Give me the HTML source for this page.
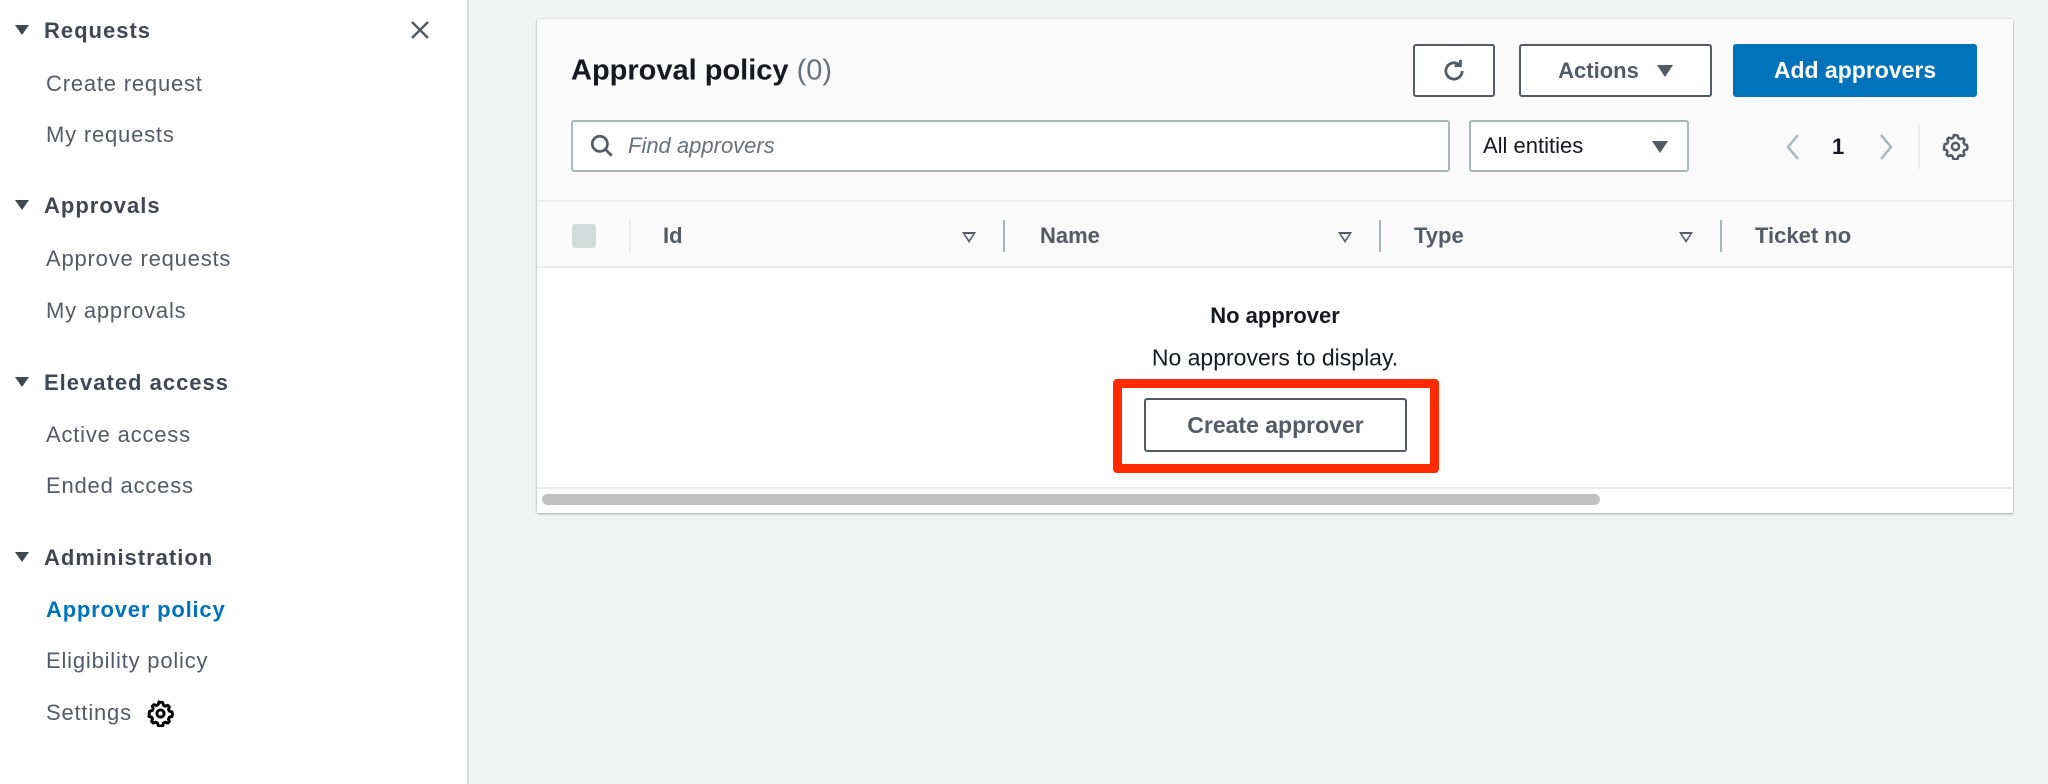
<!DOCTYPE html>
<html><head><meta charset="utf-8"><style>
*{box-sizing:border-box;margin:0;padding:0}
body{width:2048px;height:784px;background:#f2f3f3;font-family:"Liberation Sans",sans-serif;position:relative;overflow:hidden}
.side{position:absolute;left:0;top:0;width:469px;height:784px;background:#fff;border-right:2px solid #d5dbdb}
.h{position:absolute;left:44px;font-size:22px;letter-spacing:1px;font-weight:bold;color:#414750}
.h:before{content:"";position:absolute;left:-29px;top:7px;border-left:7px solid transparent;border-right:7px solid transparent;border-top:10px solid #414750}
.i{position:absolute;left:46px;font-size:22px;letter-spacing:0.8px;color:#545b64}
.t{transform:translateY(-50%)}
.panel{position:absolute;left:537px;top:19px;width:1476px;height:494px;background:#fff;box-shadow:0 1px 2px rgba(0,28,36,.3),0 0 1px rgba(0,28,36,.3)}
.hd{position:absolute;left:0;top:0;width:100%;height:183px;background:#fafafa;border-bottom:2px solid #eaeded}
.th{position:absolute;left:0;top:183px;width:100%;height:66px;background:#fafafa;border-bottom:2px solid #eaeded}
.btn{position:absolute;border:2px solid #545b64;border-radius:3px;background:#fff;color:#545b64;font-weight:bold;font-size:22px;display:flex;align-items:center;justify-content:center}
.col{position:absolute;top:34px;font-size:22px;font-weight:bold;color:#545b64;transform:translateY(-50%)}
.div{position:absolute;top:34px;width:2px;height:32px;background:#aab7b8;transform:translateY(-50%)}
.sort{position:absolute;top:30px;border-left:7px solid transparent;border-right:7px solid transparent;border-top:11px solid #545b64}
.sort:after{content:"";position:absolute;left:-4px;top:-9px;border-left:4px solid transparent;border-right:4px solid transparent;border-top:6px solid #fafafa}
</style></head><body>
<div class="side">
<div class="h t" style="top:31px">Requests</div>
<svg style="position:absolute;left:410px;top:20px" width="20" height="20" viewBox="0 0 20 20"><path d="M2 2L18 18M18 2L2 18" stroke="#545b64" stroke-width="2.5"/></svg>
<div class="i t" style="top:84px">Create request</div>
<div class="i t" style="top:135px">My requests</div>
<div class="h t" style="top:206px">Approvals</div>
<div class="i t" style="top:259px">Approve requests</div>
<div class="i t" style="top:311px">My approvals</div>
<div class="h t" style="top:383px">Elevated access</div>
<div class="i t" style="top:435px">Active access</div>
<div class="i t" style="top:486px">Ended access</div>
<div class="h t" style="top:558px">Administration</div>
<div class="i t" style="top:610px;color:#0073bb;font-weight:bold">Approver policy</div>
<div class="i t" style="top:661px">Eligibility policy</div>
<div class="i t" style="top:713px">Settings</div>
<svg style="position:absolute;left:147px;top:700px" width="27" height="27" viewBox="0 0 24 24"><path d="M12 2l2 .3.6 2.3 1.6.9 2.3-.8 1.4 1.4-.8 2.3.9 1.6 2.3.6.3 2-.3 2-2.3.6-.9 1.6.8 2.3-1.4 1.4-2.3-.8-1.6.9-.6 2.3-2 .3-2-.3-.6-2.3-1.6-.9-2.3.8-1.4-1.4.8-2.3-.9-1.6-2.3-.6L2 12l.3-2 2.3-.6.9-1.6-.8-2.3 1.4-1.4 2.3.8 1.6-.9.6-2.3z" fill="none" stroke="#000" stroke-width="2.6" stroke-linejoin="round"/><circle cx="12" cy="12" r="3.2" fill="none" stroke="#000" stroke-width="2.6"/></svg>
</div>

<div class="panel">
<div class="hd"></div>
<div style="position:absolute;left:34px;top:52px;transform:translateY(-50%);font-size:29px;font-weight:bold;color:#16191f">Approval policy <span style="font-weight:normal;color:#687078">(0)</span></div>
<div class="btn" style="left:876px;top:25px;width:82px;height:53px"><svg width="28" height="28" viewBox="0 0 24 24"><path d="M19 12a7 7 0 1 1-2.5-5.4" fill="none" stroke="#545b64" stroke-width="2.4"/><path d="M17.5 2.5v5h-5" fill="none" stroke="#545b64" stroke-width="2.4"/></svg></div>
<div class="btn" style="left:982px;top:25px;width:193px;height:53px">Actions<span style="display:inline-block;margin-left:18px;border-left:8px solid transparent;border-right:8px solid transparent;border-top:12px solid #545b64"></span></div>
<div class="btn" style="left:1196px;top:25px;width:244px;height:53px;background:#0073bb;border-color:#0073bb;color:#fff;font-size:23px">Add approvers</div>
<div style="position:absolute;left:34px;top:101px;width:879px;height:52px;border:2px solid #aab7b8;border-radius:3px;background:#fff"></div>
<svg style="position:absolute;left:52px;top:114px" width="26" height="26" viewBox="0 0 24 24"><circle cx="10" cy="10" r="7" fill="none" stroke="#545b64" stroke-width="2.5"/><path d="M15 15l6 6" stroke="#545b64" stroke-width="2.5"/></svg>
<div style="position:absolute;left:91px;top:127px;transform:translateY(-50%);font-size:22px;font-style:italic;color:#687078">Find approvers</div>
<div style="position:absolute;left:932px;top:101px;width:220px;height:52px;border:2px solid #aab7b8;border-radius:3px;background:#fff"></div>
<div style="position:absolute;left:946px;top:127px;transform:translateY(-50%);font-size:22px;color:#16191f">All entities</div>
<div style="position:absolute;left:1115px;top:122px;border-left:8px solid transparent;border-right:8px solid transparent;border-top:12px solid #545b64"></div>
<svg style="position:absolute;left:1248px;top:114px" width="16" height="28" viewBox="0 0 16 28"><path d="M13 2L3 14l10 12" fill="none" stroke="#aab7b8" stroke-width="2.5"/></svg>
<div style="position:absolute;left:1295px;top:128px;transform:translateY(-50%);font-size:22px;font-weight:bold;color:#16191f">1</div>
<svg style="position:absolute;left:1341px;top:114px" width="16" height="28" viewBox="0 0 16 28"><path d="M3 2l10 12L3 26" fill="none" stroke="#aab7b8" stroke-width="2.5"/></svg>
<div style="position:absolute;left:1381px;top:106px;width:2px;height:44px;background:#eaeded"></div>
<svg style="position:absolute;left:1405px;top:114px" width="27" height="27" viewBox="0 0 24 24"><path d="M12 2l2 .3.6 2.3 1.6.9 2.3-.8 1.4 1.4-.8 2.3.9 1.6 2.3.6.3 2-.3 2-2.3.6-.9 1.6.8 2.3-1.4 1.4-2.3-.8-1.6.9-.6 2.3-2 .3-2-.3-.6-2.3-1.6-.9-2.3.8-1.4-1.4.8-2.3-.9-1.6-2.3-.6L2 12l.3-2 2.3-.6.9-1.6-.8-2.3 1.4-1.4 2.3.8 1.6-.9.6-2.3z" fill="none" stroke="#545b64" stroke-width="2.2" stroke-linejoin="round"/><circle cx="12" cy="12" r="3.2" fill="none" stroke="#545b64" stroke-width="2.2"/></svg>
<div class="th">
<div style="position:absolute;left:35px;top:22px;width:24px;height:24px;background:#d5dbdb;border-radius:3px"></div>
<div class="div" style="left:92px;background:#eaeded"></div>
<div class="col" style="left:126px">Id</div><div class="sort" style="left:425px"></div><div class="div" style="left:466px"></div>
<div class="col" style="left:503px">Name</div><div class="sort" style="left:801px"></div><div class="div" style="left:842px"></div>
<div class="col" style="left:877px">Type</div><div class="sort" style="left:1142px"></div><div class="div" style="left:1183px"></div>
<div class="col" style="left:1218px">Ticket no</div>
</div>
<div style="position:absolute;left:0;width:100%;text-align:center;top:297px;transform:translateY(-50%);font-size:22px;font-weight:bold;color:#16191f">No approver</div>
<div style="position:absolute;left:0;width:100%;text-align:center;top:339px;transform:translateY(-50%);font-size:23px;color:#16191f">No approvers to display.</div>
<div style="position:absolute;left:576px;top:360px;width:326px;height:94px;border:9px solid #ff2a00;border-radius:4px"></div>
<div class="btn" style="left:607px;top:379px;width:263px;height:54px;font-size:23px">Create approver</div>
<div style="position:absolute;left:0;top:468px;width:100%;height:2px;background:#eaeded"></div>
<div style="position:absolute;left:5px;top:475px;width:1058px;height:11px;background:#c1c1c1;border-radius:6px"></div>
</div>
</body></html>
